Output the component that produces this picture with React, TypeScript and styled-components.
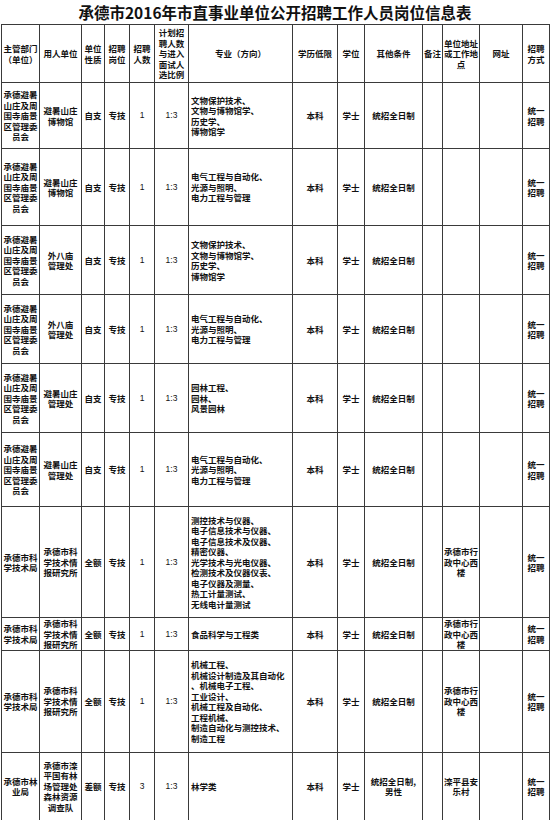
import React from "react";
import styled, { createGlobalStyle } from "styled-components";

const Global = createGlobalStyle`
  html, body { margin: 0; padding: 0; background: #ffffff; }
  body { font-family: "Noto Sans CJK SC", "Noto Sans", sans-serif; color: #111111; }
`;

const Page = styled.div`
  width: 550px;
`;

const Title = styled.h1`
  margin: 0;
  height: 24px;
  display: flex;
  align-items: center;
  justify-content: center;
  font-size: 15.5px;
  font-weight: 700;
  line-height: 1;
  padding-top: 2px;
  box-sizing: border-box;
  color: #111111;
`;

const Table = styled.table`
  border-collapse: collapse;
  table-layout: fixed;
  width: 548px;
  margin-left: 1px;
  font-size: 8.5px;
  line-height: 10.5px;
  font-weight: 700;
`;

const Col = styled.col<{ $w: number }>`
  width: ${(p) => p.$w}px;
`;

const Row = styled.tr<{ $h: number }>`
  height: ${(p) => p.$h}px;
`;

const Cell = styled.td<{ $left?: boolean; $num?: boolean }>`
  border: 1px solid #3a3a3a;
  padding: 0 ${(p) => (p.$left ? "2px" : "0")};
  text-align: ${(p) => (p.$left ? "left" : "center")};
  vertical-align: middle;
  white-space: nowrap;
  overflow: hidden;
  font-family: ${(p) =>
    p.$num ? '"Liberation Sans", Arial, sans-serif' : "inherit"};
  font-weight: ${(p) => (p.$num ? 400 : 700)};
`;

const HeadCell = styled.th`
  border: 1px solid #3a3a3a;
  padding: 0;
  text-align: center;
  vertical-align: middle;
  white-space: nowrap;
  font-weight: 700;
  overflow: hidden;
`;

const Line = styled.span`
  display: block;
`;

const widths = [38, 42, 23, 25, 25, 34, 104, 45, 27, 58, 20, 37, 43, 27];

const headers: string[][] = [
  ["主管部门", "（单位）"],
  ["用人单位"],
  ["单位", "性质"],
  ["招聘", "岗位"],
  ["招聘", "人数"],
  ["计划招", "聘人数", "与进入", "面试人", "选比例"],
  ["专业（方向）"],
  ["学历低限"],
  ["学位"],
  ["其他条件"],
  ["备注"],
  ["单位地址", "或工作地", "点"],
  ["网址"],
  ["招聘", "方式"],
];

type RowData = {
  h: number;
  dept: string[];
  unit: string[];
  kind: string;
  count: string;
  majors: string[];
  cond: string[];
  addr: string[];
};

const bureau = ["承德避暑", "山庄及周", "围寺庙景", "区管理委", "员会"];
const sci = ["承德市科", "学技术局"];
const sciUnit = ["承德市科", "学技术情", "报研究所"];
const addrCenter = ["承德市行", "政中心西", "楼"];
const relic = ["文物保护技术、", "文物与博物馆学、", "历史学、", "博物馆学"];
const elec = ["电气工程与自动化、", "光源与照明、", "电力工程与管理"];
const full = ["统招全日制"];

const rows: RowData[] = [
  { h: 66, dept: bureau, unit: ["避暑山庄", "博物馆"], kind: "自支", count: "1", majors: relic, cond: full, addr: [] },
  { h: 77, dept: bureau, unit: ["避暑山庄", "博物馆"], kind: "自支", count: "1", majors: elec, cond: full, addr: [] },
  { h: 69, dept: bureau, unit: ["外八庙", "管理处"], kind: "自支", count: "1", majors: relic, cond: full, addr: [] },
  { h: 69, dept: bureau, unit: ["外八庙", "管理处"], kind: "自支", count: "1", majors: elec, cond: full, addr: [] },
  { h: 69, dept: bureau, unit: ["避暑山庄", "管理处"], kind: "自支", count: "1", majors: ["园林工程、", "园林、", "风景园林"], cond: full, addr: [] },
  { h: 74, dept: bureau, unit: ["避暑山庄", "管理处"], kind: "自支", count: "1", majors: elec, cond: full, addr: [] },
  {
    h: 111,
    dept: sci,
    unit: sciUnit,
    kind: "全额",
    count: "1",
    majors: [
      "测控技术与仪器、",
      "电子信息技术与仪器、",
      "电子信息技术及仪器、",
      "精密仪器、",
      "光学技术与光电仪器、",
      "检测技术及仪器仪表、",
      "电子仪器及测量、",
      "热工计量测试、",
      "无线电计量测试",
    ],
    cond: full,
    addr: addrCenter,
  },
  { h: 31, dept: sci, unit: sciUnit, kind: "全额", count: "1", majors: ["食品科学与工程类"], cond: full, addr: addrCenter },
  {
    h: 102,
    dept: sci,
    unit: sciUnit,
    kind: "全额",
    count: "1",
    majors: [
      "机械工程、",
      "机械设计制造及其自动化",
      "、机械电子工程、",
      "工业设计、",
      "机械工程及自动化、",
      "工程机械、",
      "制造自动化与测控技术、",
      "制造工程",
    ],
    cond: full,
    addr: addrCenter,
  },
  {
    h: 68,
    dept: ["承德市林", "业局"],
    unit: ["承德市滦", "平国有林", "场管理处", "森林资源", "调查队"],
    kind: "差额",
    count: "3",
    majors: ["林学类"],
    cond: ["统招全日制,", "男性"],
    addr: ["滦平县安", "乐村"],
  },
];

const Lines: React.FC<{ lines: string[] }> = ({ lines }) => (
  <>
    {lines.map((l, i) => (
      <Line key={i}>{l}</Line>
    ))}
  </>
);

export default function App() {
  return (
    <Page>
      <Global />
      <Title>承德市2016年市直事业单位公开招聘工作人员岗位信息表</Title>
      <Table>
        <colgroup>
          {widths.map((w, i) => (
            <Col key={i} $w={w} />
          ))}
        </colgroup>
        <thead>
          <Row $h={58}>
            {headers.map((h, i) => (
              <HeadCell key={i}>
                <Lines lines={h} />
              </HeadCell>
            ))}
          </Row>
        </thead>
        <tbody>
          {rows.map((r, i) => (
            <Row key={i} $h={r.h}>
              <Cell>
                <Lines lines={r.dept} />
              </Cell>
              <Cell>
                <Lines lines={r.unit} />
              </Cell>
              <Cell>{r.kind}</Cell>
              <Cell>专技</Cell>
              <Cell $num>{r.count}</Cell>
              <Cell $num>1:3</Cell>
              <Cell $left>
                <Lines lines={r.majors} />
              </Cell>
              <Cell>本科</Cell>
              <Cell>学士</Cell>
              <Cell>
                <Lines lines={r.cond} />
              </Cell>
              <Cell />
              <Cell>
                <Lines lines={r.addr} />
              </Cell>
              <Cell />
              <Cell>
                <Lines lines={["统一", "招聘"]} />
              </Cell>
            </Row>
          ))}
        </tbody>
      </Table>
    </Page>
  );
}
